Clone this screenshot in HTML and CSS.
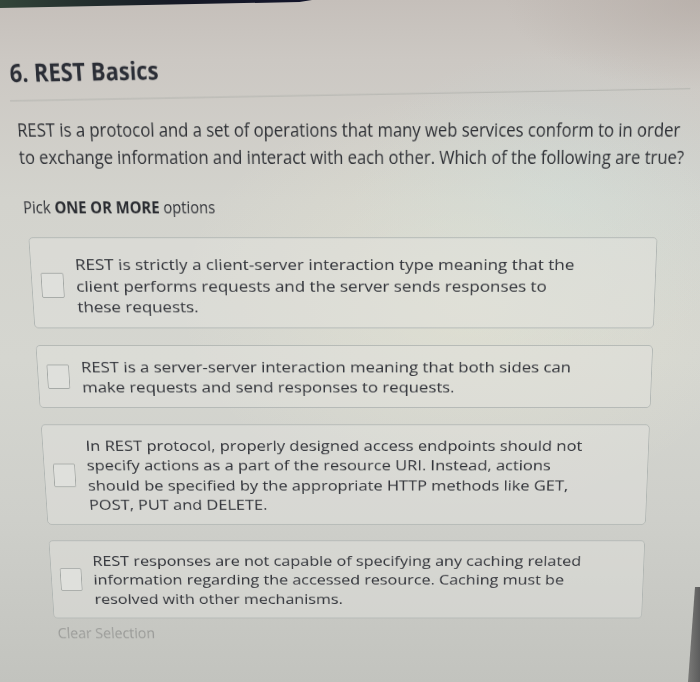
FILE: index.html
```html
<!DOCTYPE html>
<html lang="en">
<head>
<meta charset="utf-8">
<title>6. REST Basics</title>
<link rel="stylesheet" href="styles.css">
</head>
<body>
<div class="bezel-top"></div>
<div class="sheet">
  <h1 class="title">6. REST Basics</h1>
  <p class="desc">REST is a protocol and a set of operations that many web services conform to in order<br>to exchange information and interact with each other. Which of the following are true?</p>
  <p class="pick">Pick <b>ONE OR MORE</b> options</p>
  <div class="options">
    <label class="option"><span class="box"></span><span class="text">REST is strictly a client-server interaction type meaning that the<br>client performs requests and the server sends responses to<br>these requests.</span></label>
    <label class="option"><span class="box"></span><span class="text">REST is a server-server interaction meaning that both sides can<br>make requests and send responses to requests.</span></label>
    <label class="option"><span class="box"></span><span class="text">In REST protocol, properly designed access endpoints should not<br>specify actions as a part of the resource URI. Instead, actions<br>should be specified by the appropriate HTTP methods like GET,<br>POST, PUT and DELETE.</span></label>
    <label class="option"><span class="box"></span><span class="text">REST responses are not capable of specifying any caching related<br>information regarding the accessed resource. Caching must be<br>resolved with other mechanisms.</span></label>
  </div>
  <div class="clear">Clear Selection</div>
</div>
<div class="bezel-right"></div>
</body>
</html>
```
FILE: styles.css
```css
html, body {
  margin: 0;
  padding: 0;
  width: 700px;
  height: 682px;
  overflow: hidden;
}
body {
  position: relative;
  font-family: "Open Sans", "Liberation Sans", sans-serif;
  color: #303238;
  background:
    radial-gradient(ellipse 260px 120px at 700px 0px, rgba(176, 166, 160, 0.55), rgba(176, 166, 160, 0) 75%),
    radial-gradient(ellipse 420px 300px at 470px 300px, rgba(236, 236, 214, 0.4), rgba(236, 236, 214, 0) 70%),
    radial-gradient(ellipse 300px 220px at 560px 200px, rgba(200, 222, 224, 0.35), rgba(200, 222, 224, 0) 70%),
    linear-gradient(180deg, #c5bfba 0px, #ccc8c3 60px, #d3d3cd 200px, #d5d6d0 360px, #cecfca 520px, #c2c3be 682px);
}
.bezel-top {
  position: absolute;
  left: 0;
  top: 0;
  width: 312px;
  height: 8px;
  background: linear-gradient(90deg, #33463a 0%, #24302e 25%, #161a26 55%, #12142a 100%);
  clip-path: polygon(0 0, 100% 0, 96% 25%, 0 100%);
}
.bezel-right {
  position: absolute;
  right: 0;
  top: 587px;
  width: 12px;
  height: 95px;
  background: linear-gradient(90deg, #7a7a78, #5c5c5c);
  clip-path: polygon(7px 0, 12px 0, 12px 100%, 0 100%);
}
.sheet {
  width: 820px;
  padding-top: 58px;
  transform-origin: 405px 0;
  transform: translateX(-60px) perspective(800px) rotateX(-7.47deg) scaleX(0.85) skewX(0.8deg);
}
.title {
  margin: 0 4px 0 3px;
  padding: 0 0 13px 2px;
  font-size: 26px;
  line-height: 32px;
  font-weight: 700;
  color: #2b2e36;
  border-bottom: 1px solid #b3b4af;
  transform-origin: 0 100%;
  transform: rotate(-0.9deg);
}
.desc {
  margin: 16px 0 0 9px;
  font-size: 20px;
  line-height: 28.6px;
  white-space: nowrap;
  color: #2f3136;
}
.pick {
  margin: 27px 0 0 10px;
  font-size: 18px;
  line-height: 24px;
  color: #33353a;
}
.pick b {
  font-weight: 700;
  color: #2a2c31;
}
.options {
  margin: 21px 0 0 14px;
  width: 770px;
  display: flex;
  flex-direction: column;
  gap: 19px;
}
.option {
  display: flex;
  align-items: center;
  gap: 15px;
  padding: 11.5px 0 11.5px 11px;
  border: 1px solid #b1b6b3;
  border-radius: 5px;
  background: rgba(226, 227, 221, 0.45);
}
.option:first-child {
  padding-top: 17px;
}
.box {
  flex: none;
  width: 26px;
  height: 26px;
  border: 1.5px solid #a4a8a5;
  border-radius: 2px;
  background: #dfe0dc;
}
.text {
  font-size: 17.2px;
  line-height: 23.5px;
  white-space: nowrap;
  color: #32343a;
  transform-origin: 0 50%;
  transform: scaleX(1.22);
}
.clear {
  margin: 7px 0 0 18px;
  font-size: 18.5px;
  line-height: 22px;
  color: #9a9b98;
}
```
